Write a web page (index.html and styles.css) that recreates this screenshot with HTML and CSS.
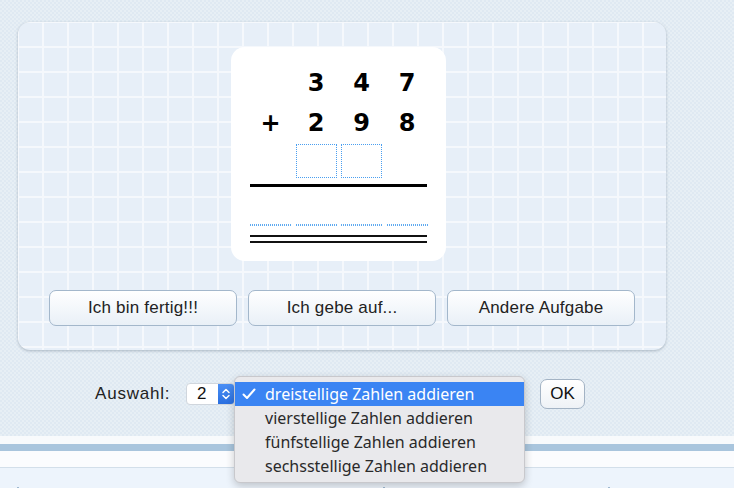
FILE: index.html
```html
<!DOCTYPE html>
<html lang="de">
<head>
    <meta charset="UTF-8">
    <meta name="viewport" content="width=device-width, initial-scale=1.0">
    <title>Schriftliche Addition</title>
    <link rel="stylesheet" href="styles.css">
</head>
<body>

    <div class="board">
        <div class="sheet">
            <div class="cols">
                <div class="cell"></div>
                <div class="cell digit">3</div>
                <div class="cell digit">4</div>
                <div class="cell digit">7</div>

                <div class="cell digit">+</div>
                <div class="cell digit">2</div>
                <div class="cell digit">9</div>
                <div class="cell digit">8</div>

                <div class="carry-cell"></div>
                <div class="carry-cell"><div class="carry"></div></div>
                <div class="carry-cell"><div class="carry"></div></div>
                <div class="carry-cell"></div>
            </div>
            <div class="sum-line"></div>
            <div class="cols result">
                <div class="answer"></div>
                <div class="answer"></div>
                <div class="answer"></div>
                <div class="answer"></div>
            </div>
            <div class="double-line"></div>
        </div>

        <div class="buttons">
            <button class="btn">Ich bin fertig!!!</button>
            <button class="btn">Ich gebe auf...</button>
            <button class="btn">Andere Aufgabe</button>
        </div>
    </div>

    <div class="choice">
        <span class="label">Auswahl:</span>
        <div class="select-wrap">
            <div class="select">
                <span class="value">2</span>
                <span class="stepper">
                    <svg width="10" height="14" viewBox="0 0 10 14">
                        <path d="M2 5.5 L5 2.5 L8 5.5 M2 8.5 L5 11.5 L8 8.5" fill="none" stroke="#fff" stroke-width="1.5" stroke-linecap="round" stroke-linejoin="round"/>
                    </svg>
                </span>
            </div>
            <ul class="menu">
                <li class="active">
                    <svg class="check" width="14" height="12" viewBox="0 0 14 12">
                        <path d="M1.5 6.5 L5 10 L12.5 1.5" fill="none" stroke="#fff" stroke-width="2" stroke-linecap="round" stroke-linejoin="round"/>
                    </svg>
                    dreistellige Zahlen addieren
                </li>
                <li>vierstellige Zahlen addieren</li>
                <li>fünfstellige Zahlen addieren</li>
                <li>sechsstellige Zahlen addieren</li>
            </ul>
        </div>
        <button class="ok">OK</button>
    </div>

    <div class="footer">
        <div class="bar"></div>
        <div class="strip"></div>
        <div class="ticks">
            <span class="tick"></span>
            <span class="tick"></span>
            <span class="tick"></span>
        </div>
    </div>

</body>
</html>
```

FILE: styles.css
```css
body {
    margin: 0;
    padding: 0;
    height: 488px;
    overflow: hidden;
    background-color: #dfe9f2;
    background-image:
        linear-gradient(45deg, rgba(255, 255, 255, 0.25) 25%, transparent 25%, transparent 75%, rgba(255, 255, 255, 0.25) 75%),
        linear-gradient(45deg, rgba(255, 255, 255, 0.25) 25%, transparent 25%, transparent 75%, rgba(255, 255, 255, 0.25) 75%);
    background-size: 4px 4px;
    background-position: 0 0, 2px 2px;
    font-family: "Liberation Sans", Arial, sans-serif;
}

.board {
    width: 648px;
    height: 328px;
    box-sizing: border-box;
    margin: 22px 0 0 18px;
    padding-top: 25px;
    border-radius: 12px;
    background-color: #e7eff8;
    background-image:
        linear-gradient(to right, #f5f8fc 2px, transparent 2px),
        linear-gradient(to bottom, #f5f8fc 2px, transparent 2px);
    background-size: 25px 25px;
    background-position: -1px -1px;
    box-shadow: 0 1px 3px rgba(60, 80, 100, 0.35);
}

.sheet {
    width: 215px;
    height: 214px;
    box-sizing: border-box;
    margin-left: 213px;
    padding: 16px 19px 0 19px;
    background: #fff;
    border-radius: 14px;
}

.cols {
    display: grid;
    grid-template-columns: repeat(4, 41px);
    column-gap: 4.5px;
}

.cell {
    height: 40px;
    line-height: 40px;
    text-align: center;
}

.digit {
    font-family: "DejaVu Sans", Verdana, sans-serif;
    font-weight: bold;
    font-size: 24px;
    color: #000;
}

.carry-cell {
    height: 34px;
    padding-top: 1px;
}

.carry {
    height: 32px;
    border: 1px dotted #4a9ff0;
}

.sum-line {
    height: 3px;
    background: #000;
    margin-top: 6px;
}

.result {
    margin-top: 37px;
}

.answer {
    height: 0;
    border-top: 1px dotted #5eaaf0;
    border-bottom: 1px dotted #5eaaf0;
}

.double-line {
    height: 4px;
    margin-top: 9px;
    border-top: 2px solid #111;
    border-bottom: 2px solid #111;
}

.buttons {
    display: flex;
    gap: 11px;
    margin: 29px 0 0 31px;
}

.btn {
    width: 188px;
    height: 36px;
    border: 1px solid #a3b7cb;
    border-radius: 7px;
    background: linear-gradient(to bottom, #ffffff, #e9f0f7);
    font-family: "Liberation Sans", Arial, sans-serif;
    font-size: 17px;
    letter-spacing: 0.2px;
    color: #222;
    padding: 0;
}

.choice {
    display: flex;
    align-items: center;
    margin: 28px 0 0 95px;
    height: 31px;
}

.label {
    width: 91px;
    font-size: 17px;
    color: #222;
    letter-spacing: 0.8px;
}

.select-wrap {
    position: relative;
    z-index: 2;
}

.select {
    display: flex;
    width: 49px;
    height: 22px;
    box-sizing: border-box;
    border: 1px solid #d0d6dd;
    border-radius: 4px;
    background: #fff;
    overflow: hidden;
}

.value {
    flex: 1;
    font-size: 17px;
    line-height: 20px;
    padding-left: 10px;
    color: #111;
}

.stepper {
    width: 16px;
    display: flex;
    align-items: center;
    justify-content: center;
    background: linear-gradient(to bottom, #4a8ff5, #2a6fe0);
}

.menu {
    position: absolute;
    left: 48px;
    top: -7px;
    width: 291px;
    margin: 0;
    padding: 5px 0 4px 0;
    list-style: none;
    background: #e9e9ec;
    border: 1px solid #c8c8cc;
    border-radius: 6px;
    box-shadow: 0 3px 8px rgba(0, 0, 0, 0.2);
    box-sizing: border-box;
}

.menu li {
    position: relative;
    height: 24px;
    line-height: 24px;
    padding-left: 30px;
    font-family: "Noto Sans", "Liberation Sans", sans-serif;
    font-size: 16px;
    color: #2a2a2a;
    white-space: nowrap;
}

.menu li.active {
    background: #3a84f3;
    color: #fff;
}

.check {
    position: absolute;
    left: 7px;
    top: 6px;
}

.ok {
    margin-left: 305px;
    width: 45px;
    height: 30px;
    border: 1px solid #a3b3c4;
    border-radius: 7px;
    background: linear-gradient(to bottom, #ffffff, #eef2f6);
    font-family: "Liberation Sans", Arial, sans-serif;
    font-size: 17px;
    color: #111;
    padding: 0;
}

.footer {
    margin-top: 27px;
    border-top: 8px solid #f8fafc;
}

.bar {
    height: 7px;
    background: #a9c5dd;
}

.strip {
    height: 16px;
    background: #fbfcfe;
    border-bottom: 1px solid #d3dfea;
}

.ticks {
    height: 40px;
    background: #edf4fc;
    position: relative;
}

.tick {
    position: absolute;
    top: 19px;
    width: 2px;
    height: 6px;
    background: #9fb8d0;
}

.tick:nth-child(1) { left: 17px; }
.tick:nth-child(2) { left: 383px; }
.tick:nth-child(3) { left: 608px; }
```
